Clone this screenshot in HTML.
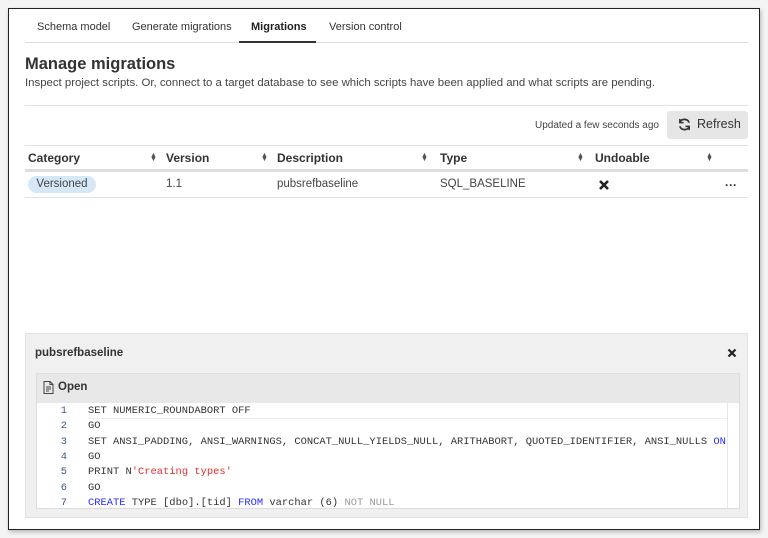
<!DOCTYPE html>
<html><head><style>
*{margin:0;padding:0;box-sizing:border-box}
body{width:768px;height:538px;background:#f4f4f4;font-family:"Liberation Sans",sans-serif;position:relative;overflow:hidden;color:#222}
.win{position:absolute;left:8px;top:8px;width:752px;height:522px;background:#fff;border:1px solid #222;box-shadow:1px 2px 4px rgba(0,0,0,.25)}
.a{position:absolute;white-space:nowrap}
.tab{font-size:11px;color:#333;top:21px}
.hd{font-weight:bold;font-size:12px;color:#333;top:151px}
.srt{font-size:7px;color:#555;top:154px;line-height:4px}
.code{font-family:"Liberation Mono","DejaVu Sans Mono",monospace;font-size:10.43px;line-height:15.35px}
.ln{color:#3a5a8a;text-align:right;width:20px}
.kw{color:#2a2aff}.st{color:#e03030}.gr{color:#999}
</style></head><body>
<div class="win"></div>
<div class="a tab" style="left:37px">Schema model</div>
<div class="a tab" style="left:132px">Generate migrations</div>
<div class="a tab" style="left:251px;font-weight:bold;color:#222">Migrations</div>
<div class="a tab" style="left:329px">Version control</div>
<div class="a" style="left:25px;top:42px;width:723px;height:1px;background:#ddd"></div>
<div class="a" style="left:239px;top:41px;width:77px;height:2px;background:#333"></div>
<div class="a" style="left:25px;top:55px;font-size:16.5px;font-weight:bold;color:#333">Manage migrations</div>
<div class="a" style="left:25px;top:77px;font-size:11.4px;color:#444">Inspect project scripts. Or, connect to a target database to see which scripts have been applied and what scripts are pending.</div>
<div class="a" style="left:25px;top:105px;width:723px;height:1px;background:#e2e2e2"></div>
<div class="a" style="left:535px;top:120px;font-size:10px;color:#444">Updated a few seconds ago</div>
<div class="a" style="left:667px;top:111px;width:81px;height:28px;background:#e6e6e6;border-radius:3px"></div>
<svg class="a" style="left:677px;top:117px" width="15" height="15" viewBox="0 0 16 16" fill="none" stroke="#333" stroke-width="1.8"><path d="M13 6A5.5 5.5 0 0 0 3 5.5M3 10a5.5 5.5 0 0 0 10 .5"/><path d="M3 2v4h4M13 14v-4h-4" stroke-width="1.6"/></svg>
<div class="a" style="left:697px;top:117px;font-size:12.5px;color:#333">Refresh</div>
<div class="a" style="left:25px;top:145px;width:723px;height:1px;background:#e2e2e2"></div>
<div class="a hd" style="left:28px">Category</div><div class="a srt" style="left:150px">▲<br>▼</div>
<div class="a hd" style="left:166px">Version</div><div class="a srt" style="left:261px">▲<br>▼</div>
<div class="a hd" style="left:277px">Description</div><div class="a srt" style="left:421px">▲<br>▼</div>
<div class="a hd" style="left:440px">Type</div><div class="a srt" style="left:577px">▲<br>▼</div>
<div class="a hd" style="left:595px">Undoable</div><div class="a srt" style="left:706px">▲<br>▼</div>
<div class="a" style="left:25px;top:169px;width:723px;height:3px;background:#ddd"></div>
<div class="a" style="left:28px;top:176px;width:68px;height:17px;background:#d6e8f8;border-radius:9px;font-size:11.5px;color:#444;text-align:center;line-height:17px">Versioned</div>
<div class="a" style="left:166px;top:178px;font-size:11.5px;color:#444">1.1</div>
<div class="a" style="left:277px;top:178px;font-size:11.5px;color:#444">pubsrefbaseline</div>
<div class="a" style="left:440px;top:178px;font-size:11.5px;color:#444">SQL_BASELINE</div>
<svg class="a" style="left:598px;top:179px" width="12" height="12" viewBox="0 0 12 12"><path d="M2 2L10 10M10 2L2 10" stroke="#222" stroke-width="2.6"/></svg>
<div class="a" style="left:725px;top:178px;font-size:12px;font-weight:bold;color:#333">···</div>
<div class="a" style="left:25px;top:197px;width:723px;height:1px;background:#e2e2e2"></div>
<div class="a" style="left:25px;top:333px;width:723px;height:185px;background:#f0f0f0;border:1px solid #e2e2e2"></div>
<div class="a" style="left:35px;top:347px;font-size:11.5px;font-weight:bold;color:#333">pubsrefbaseline</div>
<svg class="a" style="left:727px;top:348px" width="10" height="10" viewBox="0 0 10 10"><path d="M1.5 1.5L8.5 8.5M8.5 1.5L1.5 8.5" stroke="#222" stroke-width="2.2"/></svg>
<div class="a" style="left:36px;top:373px;width:704px;height:136px;background:#fff;border:1px solid #ddd"></div>
<div class="a" style="left:37px;top:374px;width:702px;height:29px;background:#e8e8e8"></div>
<svg class="a" style="left:43px;top:381px" width="11" height="13" viewBox="0 0 11 13" fill="none" stroke="#444" stroke-width="1"><path d="M1 .5h6l3 3v9H1z M7 .5v3h3 M3 6h5M3 8h5M3 10h3"/></svg>
<div class="a" style="left:58px;top:381px;font-size:11.5px;font-weight:bold;color:#333">Open</div>
<div class="a" style="left:727px;top:403px;width:1px;height:105px;background:#e6e6e6"></div>
<div class="a" style="left:88px;top:418px;width:639px;height:1px;background:#eee"></div>
<div class="a code ln" style="left:47px;top:404px">1<br>2<br>3<br>4<br>5<br>6<br>7</div>
<div class="a code" style="left:88px;top:404px;color:#333">SET NUMERIC_ROUNDABORT OFF<br>GO<br>SET ANSI_PADDING, ANSI_WARNINGS, CONCAT_NULL_YIELDS_NULL, ARITHABORT, QUOTED_IDENTIFIER, ANSI_NULLS <span class="kw">ON</span><br>GO<br>PRINT N<span class="st">'Creating types'</span><br>GO<br><span class="kw">CREATE</span> TYPE [dbo].[tid] <span class="kw">FROM</span> varchar (6) <span class="gr">NOT NULL</span></div>
</body></html>
